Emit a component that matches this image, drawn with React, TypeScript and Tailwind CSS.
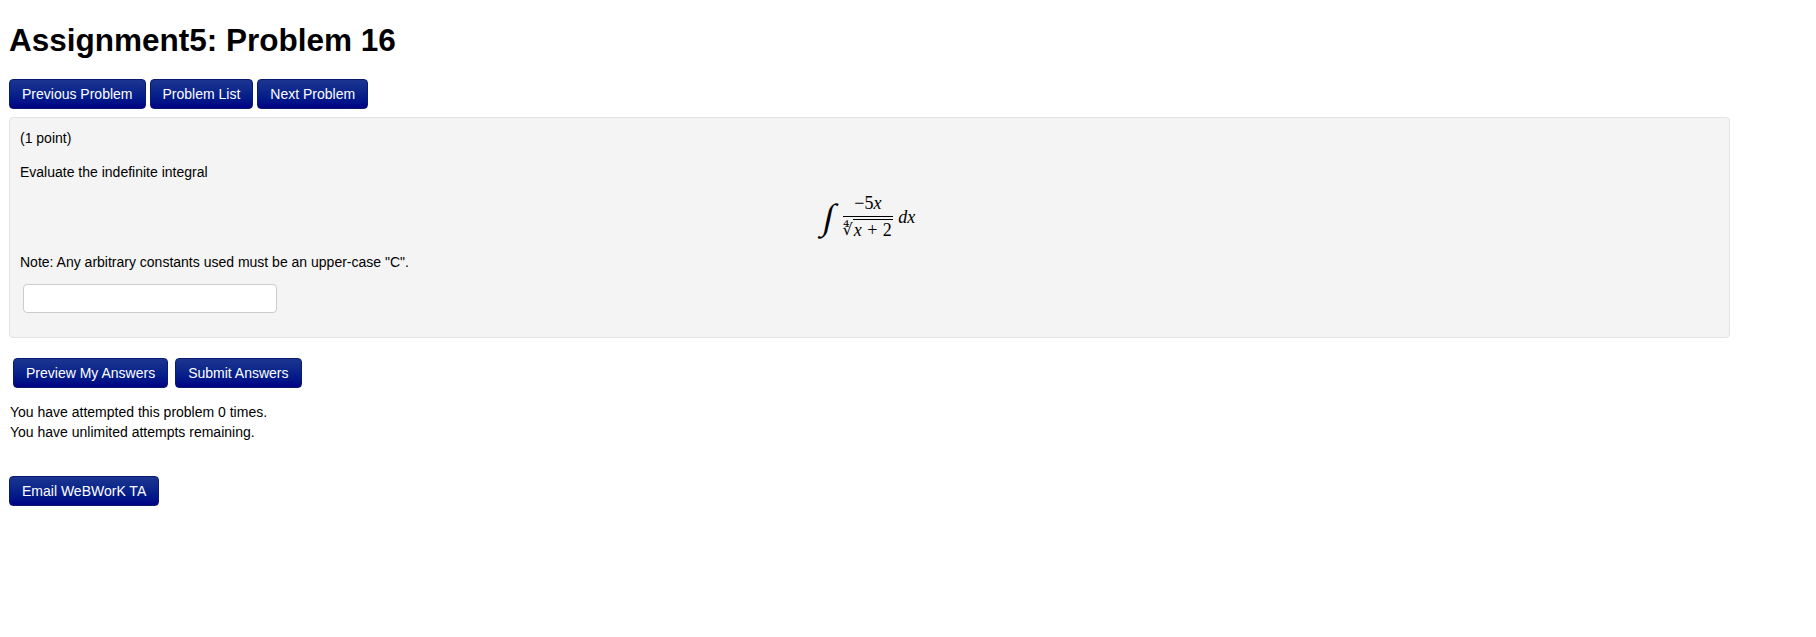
import * as React from 'react';

// ============================================================================
// Button
// ============================================================================

function NavButton({ children }: { children: React.ReactNode }) {
  return (
    <button
      type="button"
      className="rounded-[4px] border border-[#0a1a6e] bg-gradient-to-b from-[#1c3590] to-[#000085] px-3 py-1 text-[14px] leading-5 text-white"
    >
      {children}
    </button>
  );
}

// ============================================================================
// Math display: ∫ -5x / ∜(x+2) dx
// ============================================================================

function IntegralDisplay() {
  return (
    <div
      className="flex items-center justify-center gap-[5px] text-black"
      style={{ fontFamily: '"Liberation Serif", "DejaVu Serif", serif' }}
    >
      <span className="mr-[4px] inline-block -skew-x-12 text-[36px] leading-[40px] italic">∫</span>
      <div className="flex flex-col items-center">
        <span className="px-[3px] pb-[3px] text-[18px] leading-[19px]">
          −5<i>x</i>
        </span>
        <div className="w-full border-t border-black" />
        <span className="flex items-end pt-[2px] text-[18px] leading-[20px]">
          <span style={{ fontFamily: '"DejaVu Serif", serif' }} className="text-[16px] leading-[20px]">
            ∜
          </span>
          <span className="border-t border-black px-[1px] tracking-[0.5px]">
            <i>x</i>&nbsp;+&nbsp;2
          </span>
        </span>
      </div>
      <span className="text-[18px] italic">dx</span>
    </div>
  );
}

// ============================================================================
// App
// ============================================================================

export default function App() {
  return (
    <div
      className="min-h-[637px] w-[1816px] bg-white px-[9px] pt-[22px] text-[14px] leading-5 text-black"
      style={{ fontFamily: '"Liberation Sans", Arial, sans-serif' }}
    >
      <h1 className="text-[31.5px] leading-9 font-bold">Assignment5: Problem 16</h1>

      <div className="mt-[21px] flex gap-1">
        <NavButton>Previous Problem</NavButton>
        <NavButton>Problem List</NavButton>
        <NavButton>Next Problem</NavButton>
      </div>

      {/* Problem body */}
      <div className="mt-2 w-[1721px] rounded-[4px] border border-[#e3e3e3] bg-[#f4f4f4] p-[10px]">
        <p>(1 point)</p>
        <p className="mt-[14px]">Evaluate the indefinite integral</p>
        <div className="flex h-[70px] items-center justify-center">
          <IntegralDisplay />
        </div>
        <p>Note: Any arbitrary constants used must be an upper-case "C".</p>
        <input
          type="text"
          className="mt-3 mb-[14px] ml-[3px] block h-[29px] w-[254px] rounded-[4px] border border-[#cccccc] bg-white px-2"
        />
      </div>

      <div className="mt-[20px] flex gap-[7px] pl-1">
        <NavButton>Preview My Answers</NavButton>
        <NavButton>Submit Answers</NavButton>
      </div>

      <div className="mt-[14px] pl-px">
        <p>You have attempted this problem 0 times.</p>
        <p>You have unlimited attempts remaining.</p>
      </div>

      <div className="mt-[34px]">
        <NavButton>Email WeBWorK TA</NavButton>
      </div>
    </div>
  );
}
